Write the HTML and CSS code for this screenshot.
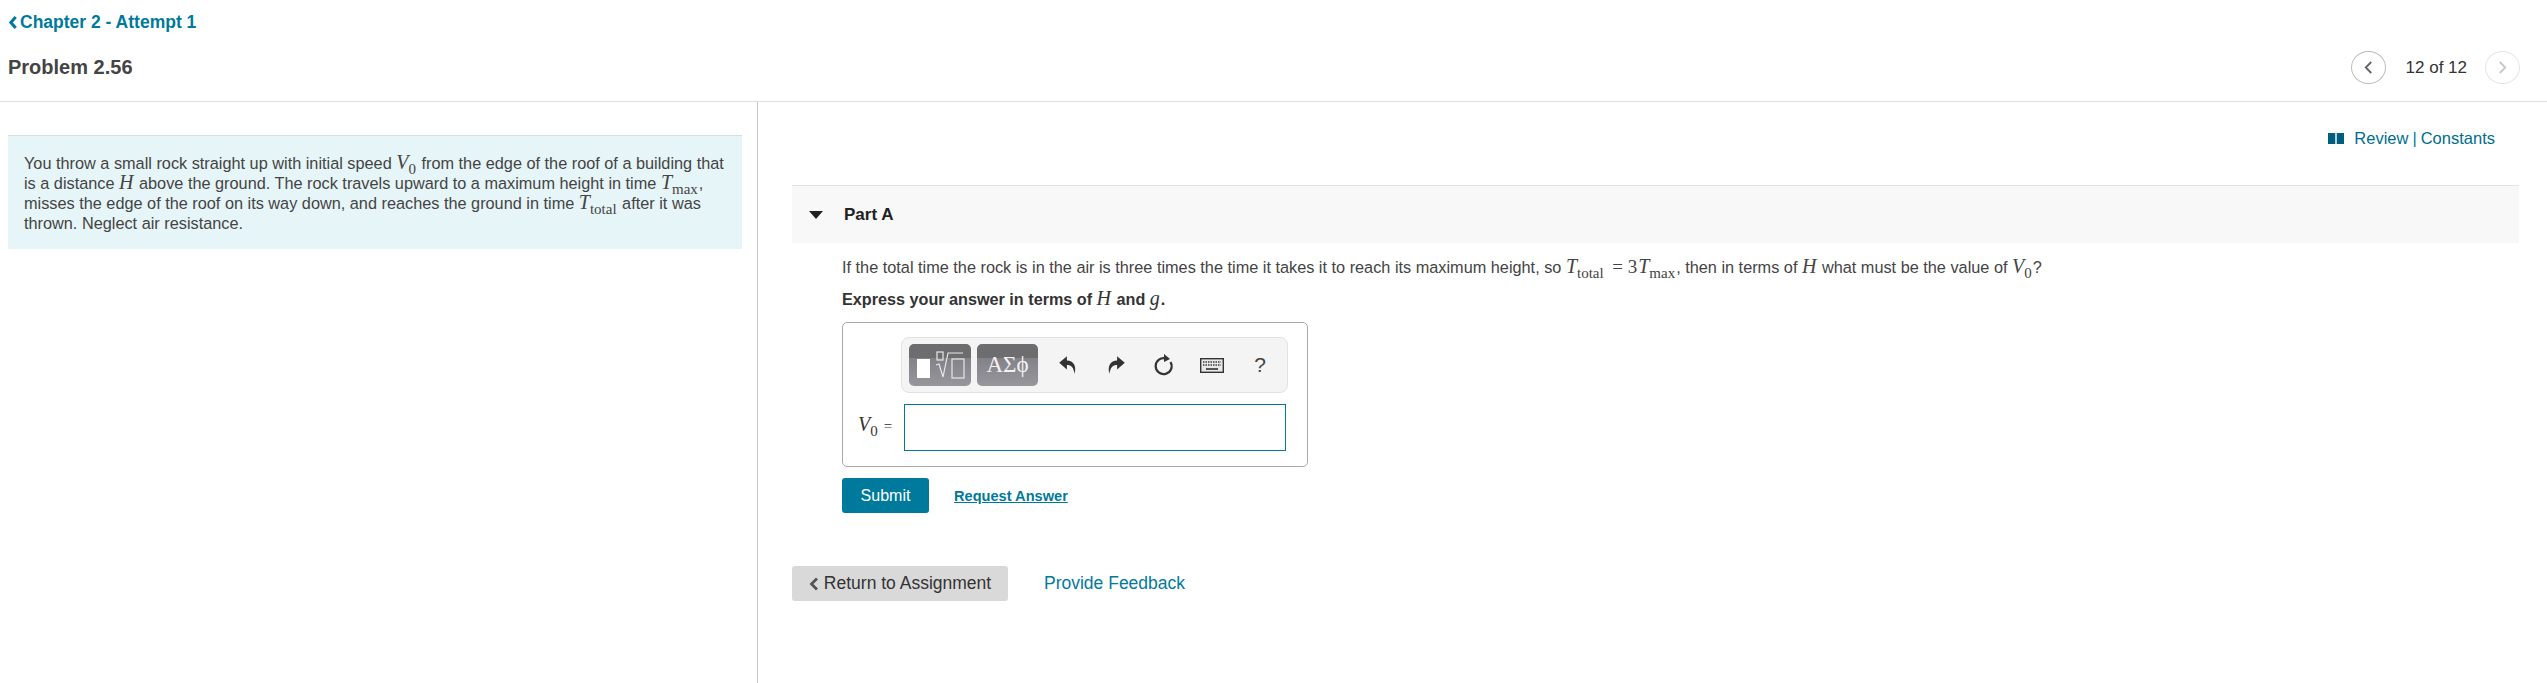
FILE: index.html
```html
<!DOCTYPE html>
<html lang="en">
<head>
  <meta charset="UTF-8">
  <title>Problem 2.56</title>
  <link rel="stylesheet" href="styles.css">
</head>
<body>
  <header class="top">
    <a class="back-link" href="#"><svg class="chev" viewBox="0 0 8 12"><path d="M6.500 1 2 6l4.500 5" fill="none" stroke="#007a9c" stroke-width="2.800"/></svg>Chapter 2 - Attempt 1</a>
    <div class="title-row">
      <h1>Problem 2.56</h1>
      <div class="pager">
        <span class="round prev"><svg viewBox="0 0 12 16" width="11" height="15"><path d="M9 2 3 8l6 6" fill="none" stroke="#5b6770" stroke-width="2"/></svg></span>
        <span class="count">12 of 12</span>
        <span class="round off"><svg viewBox="0 0 12 16" width="11" height="15"><path d="m3 2 6 6-6 6" fill="none" stroke="#c4c8cc" stroke-width="2"/></svg></span>
      </div>
    </div>
  </header>

  <div class="main">
    <aside class="left">
      <div class="intro">
        You throw a small rock straight up with initial speed <span class="m">V<sub>0</sub></span> from the edge of the roof of a building that is a distance <span class="m">H</span> above the ground. The rock travels upward to a maximum height in time <span class="m">T<sub>max</sub></span>, misses the edge of the roof on its way down, and reaches the ground in time <span class="m">T<sub>total</sub></span> after it was thrown. Neglect air resistance.
      </div>
    </aside>

    <section class="right">
      <div class="review">
        <svg class="book" viewBox="0 0 16 11"><path d="M0 0h7.300v11H0zM8.700 0H16v11H8.700z" fill="#005f7f"/></svg>
        <a href="#">Review</a> | <a href="#">Constants</a>
      </div>

      <div class="part-head">
        <span class="arrow"></span>
        <h2>Part A</h2>
      </div>

      <div class="part-body">
        <p class="question">If the total time the rock is in the air is three times the time it takes it to reach its maximum height, so <span class="m">T<sub>total</sub></span> <span class="eq">= 3</span><span class="m">T<sub>max</sub></span>, then in terms of <span class="m">H</span> what must be the value of <span class="m">V<sub>0</sub></span>?</p>
        <p class="express">Express your answer in terms of <span class="m">H</span> and <span class="m">g</span>.</p>

        <div class="answer-box">
          <div class="toolbar">
            <span class="tpl tpl-a">
              <svg viewBox="0 0 62 42" width="62" height="42">
                <rect x="8" y="15" width="13" height="19" fill="#fff"/>
                <rect x="28" y="8" width="6" height="8" fill="none" stroke="#e8e8e8" stroke-width="1.200"/>
                <path d="M27 21l3-1 4 13 5-24h15" fill="none" stroke="#e8e8e8" stroke-width="1.200"/>
                <rect x="43" y="15" width="12" height="19" fill="none" stroke="#e8e8e8" stroke-width="1.200"/>
              </svg>
            </span>
            <span class="tpl tpl-b">ΑΣϕ</span>
            <span class="tool first"><svg viewBox="0 0 18 20" width="20" height="22"><path d="M8 2 1 8l7 6v-4c4 0 6 2 7 8 2-7-1-12-7-12z" fill="#333"/></svg></span>
            <span class="tool"><svg viewBox="0 0 18 20" width="20" height="22"><path d="m10 2 7 6-7 6v-4c-4 0-6 2-7 8-2-7 1-12 7-12z" fill="#333"/></svg></span>
            <span class="tool"><svg viewBox="0 0 22 24" width="22" height="24"><path d="M13 5.500A8 8 0 1 0 17.500 9" fill="none" stroke="#333" stroke-width="2.200"/><path d="m11 1 6 5-6 3z" fill="#333"/></svg></span>
            <span class="tool"><svg viewBox="0 0 24 15" width="24" height="15"><rect x=".7" y=".7" width="22.600" height="13.600" fill="#e8e8e8" stroke="#333" stroke-width="1.400"/><path d="M3 4h18M3 7h18" stroke="#666" stroke-width="2" stroke-dasharray="1.500 1"/><path d="M6 11h12" stroke="#555" stroke-width="2"/></svg></span>
            <span class="tool help">?</span>
          </div>
          <div class="input-row">
            <label class="m v-label">V<sub>0</sub><span class="eq">=</span></label>
            <div class="input"></div>
          </div>
        </div>

        <div class="actions">
          <button class="submit" type="button">Submit</button>
          <a class="request" href="#">Request Answer</a>
        </div>
      </div>

      <div class="footer-row">
        <button class="return" type="button"><svg class="chev-dark" viewBox="0 0 10 14"><path d="M8 1.500 2.500 7 8 12.500" fill="none" stroke="#555" stroke-width="2.800"/></svg>Return to Assignment</button>
        <a class="feedback" href="#">Provide Feedback</a>
      </div>
    </section>
  </div>
</body>
</html>
```

FILE: styles.css
```css
body {
  margin: 0;
  min-height: 100vh;
  display: flex;
  flex-direction: column;
  background: #fff;
  font-family: "Liberation Sans", Arial, sans-serif;
  font-size: 16px;
  color: #333;
}

a {
  color: #007a9c;
  text-decoration: none;
}

sub {
  font-family: "Liberation Serif", serif;
  font-style: normal;
  font-size: 0.75em;
  line-height: 0;
}

.m {
  margin-right: 1px;
  font-family: "Liberation Serif", serif;
  font-style: italic;
  font-size: 20px;
  line-height: 0;
}

.eq {
  margin: 0 1px 0 3px;
  font-family: "Liberation Serif", serif;
  font-size: 19px;
  line-height: 0;
}

/* top bar */
.top {
  height: 101px;
  border-bottom: 1px solid #ddd;
  flex-shrink: 0;
}

.back-link {
  display: flex;
  align-items: center;
  padding: 13px 0 0 8px;
  height: 18px;
  font-size: 17.500px;
  font-weight: bold;
}

.chev {
  width: 10px;
  height: 13px;
  margin-right: 2px;
}

.title-row {
  display: flex;
  justify-content: space-between;
  align-items: center;
  padding: 20px 27px 0 8px;
}

h1 {
  margin: 0;
  font-size: 20px;
  color: #444;
}

.pager {
  display: flex;
  align-items: center;
  gap: 18px;
}

.round {
  width: 33px;
  height: 31px;
  border: 1px solid #bbb;
  border-radius: 50%;
  display: flex;
  align-items: center;
  justify-content: center;
}

.round.prev {
  margin-right: 2px;
}

.round.off {
  border-color: #e5e5e5;
}

.count {
  font-size: 17px;
}

/* columns */
.main {
  flex: 1;
  display: flex;
}

.left {
  width: 758px;
  padding: 33px 0 0 8px;
  box-sizing: border-box;
  border-right: 1px solid #ccc;
  flex-shrink: 0;
}

.intro {
  width: 734px;
  box-sizing: border-box;
  padding: 17px 16px 16px 16px;
  background: #e6f5f7;
  border-top: 1px solid #d5dfe0;
  font-size: 16.300px;
  line-height: 20px;
  color: #444;
}

.right {
  flex: 1;
  padding-left: 34px;
  min-width: 0;
}

.review {
  display: flex;
  justify-content: flex-end;
  align-items: center;
  gap: 4px;
  height: 20px;
  margin-top: 26px;
  padding-right: 52px;
  font-size: 16.500px;
  color: #007a9c;
}

.review a {
  color: #006d8f;
}

.book {
  width: 16px;
  height: 11px;
  margin-right: 6px;
}

.part-head {
  display: flex;
  align-items: center;
  width: 1727px;
  height: 57px;
  margin-top: 37px;
  background: #f8f8f8;
  border-top: 1px solid #e5e5e5;
}

.arrow {
  width: 0;
  height: 0;
  margin-left: 17px;
  border-left: 7px solid transparent;
  border-right: 7px solid transparent;
  border-top: 8px solid #222;
}

h2 {
  margin: 0 0 0 21px;
  font-size: 17px;
  color: #222;
}

.part-body {
  padding-left: 50px;
}

.question {
  margin: 14px 0 0;
  font-size: 16.300px;
  line-height: 20px;
  color: #444;
}

.express {
  margin: 12px 0 0;
  font-size: 16.200px;
  font-weight: bold;
  line-height: 20px;
}

.express .m {
  font-weight: normal;
}

.answer-box {
  width: 430px;
  height: 129px;
  margin-top: 13px;
  padding: 14px 20px 0 14px;
  border: 1px solid #aaa;
  border-radius: 5px;
}

.toolbar {
  display: flex;
  align-items: center;
  box-sizing: border-box;
  width: 387px;
  height: 56px;
  margin-left: 44px;
  padding-left: 7px;
  background: #f4f4f4;
  border: 1px solid #e2e2e2;
  border-radius: 8px;
}

.tpl {
  height: 42px;
  border-radius: 5px;
  background: linear-gradient(#6d6d6f 0 33%, #828288 34%, #96969c 100%);
  display: flex;
  align-items: center;
  justify-content: center;
  color: #f2f2f2;
}

.tpl-a {
  width: 62px;
  margin-right: 6px;
}

.tpl-b {
  width: 61px;
  font-family: "Liberation Serif", serif;
  font-size: 23px;
}

.tool {
  display: flex;
  align-items: center;
  justify-content: center;
  width: 48px;
  height: 42px;
}

.tool.first {
  margin-left: 6px;
}

.help {
  font-size: 21px;
  color: #444;
}

.input-row {
  display: flex;
  align-items: center;
  margin-top: 11px;
}

.v-label {
  width: 46px;
  padding-left: 1px;
  box-sizing: border-box;
  color: #333;
}

.v-label .eq {
  margin-left: 6px;
  font-size: 15px;
  font-style: normal;
}

.input {
  width: 382px;
  height: 47px;
  box-sizing: border-box;
  border: 1px solid #007a9c;
  background: #fff;
}

.actions {
  display: flex;
  align-items: center;
  margin-top: 11px;
}

.submit {
  width: 87px;
  height: 35px;
  border: 0;
  border-radius: 3px;
  background: #007a9c;
  color: #fff;
  font-family: inherit;
  font-size: 16px;
}

.request {
  margin-left: 25px;
  font-size: 14.600px;
  font-weight: bold;
  text-decoration: underline;
}

.footer-row {
  display: flex;
  align-items: center;
  margin-top: 53px;
}

.return {
  display: flex;
  align-items: center;
  justify-content: center;
  width: 216px;
  height: 35px;
  border: 0;
  border-radius: 3px;
  background: #d9d9d9;
  color: #333;
  font-family: inherit;
  font-size: 17.500px;
}

.chev-dark {
  width: 10px;
  height: 14px;
  margin-right: 5px;
}

.feedback {
  margin-left: 36px;
  font-size: 17.500px;
}
```
